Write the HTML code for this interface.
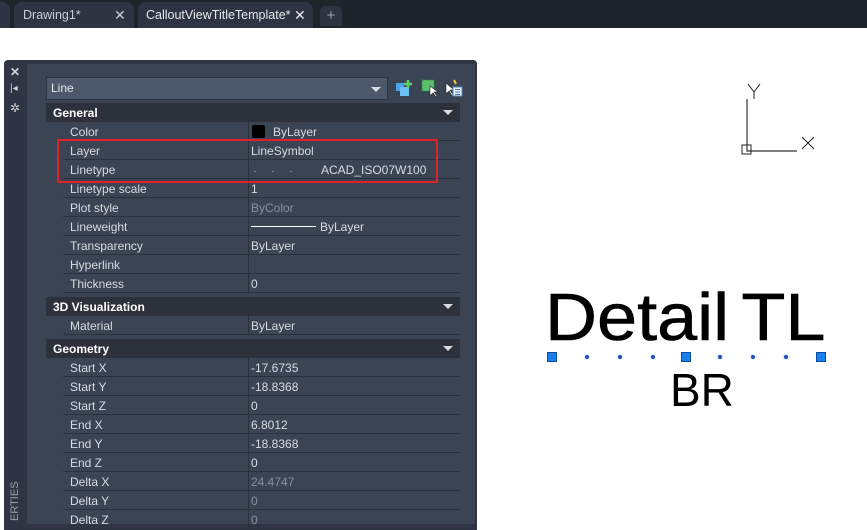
<!DOCTYPE html>
<html><head><style>
*{margin:0;padding:0;box-sizing:border-box}
body{width:867px;height:521px;background:#fff;position:relative;overflow:hidden;font-family:"Liberation Sans",sans-serif}
.a{position:absolute}
.tabbar{left:0;top:0;width:867px;height:28px;background:#1f232a}
.tab{top:2px;height:26px;background:#2e3441;border-radius:8px 8px 0 0;color:#c9ced6;font-size:12.5px;line-height:26px;white-space:nowrap}
.panel{left:4px;top:60px;width:473px;height:470px;background:#2f3542;border-radius:4px 4px 0 0}
.inner{left:27px;top:64px;width:448px;height:460px;background:#3b4453}
.row{position:absolute;left:63px;width:397px;height:19px;border-bottom:1px solid #2b313b;font-size:12px;color:#d8dce2;line-height:20px}
.row .l{position:absolute;left:7px;top:0}
.row .v{position:absolute;left:185px;top:0;width:212px;height:19px;border-left:1px solid #2b313b;padding-left:2px}
.hdr{position:absolute;left:46px;width:414px;height:19px;background:#2c313c;color:#fff;font-weight:bold;font-size:12px;line-height:20px;padding-left:7px}
.hdr:after{content:"";position:absolute;right:7px;top:7px;border-left:5px solid transparent;border-right:5px solid transparent;border-top:5px solid #d8dce2}
.gray{color:#8a909a}
</style></head><body>
<div class="a tabbar"></div>
<div class="a tab" style="left:-10px;width:20px"></div>
<div class="a tab" style="left:14px;width:120px;padding-left:9px">Drawing1*<span style="position:absolute;left:100px;font-size:14px">✕</span></div>
<div class="a tab" style="left:138px;width:175px;padding-left:8px;color:#e6e9ee">CalloutViewTitleTemplate*<span style="position:absolute;left:156px;font-size:14px">✕</span></div>
<div class="a tab" style="left:320px;top:6px;width:22px;height:20px;line-height:20px;text-align:center;border-radius:6px 6px 0 0;font-size:15px;color:#9aa0aa">+</div>

<div class="a panel"></div>
<div class="a inner"></div>
<div class="a" style="left:10px;top:64px;color:#d0d4da;font-size:12px;line-height:16px;font-weight:bold">✕</div>
<div class="a" style="left:10px;top:83px;color:#d0d4da;font-size:10px">|◂</div>
<div class="a" style="left:10px;top:101px;color:#d0d4da;font-size:12px">✲</div>
<div class="a" style="left:9px;top:521px;width:40px;height:14px;color:#9aa0aa;font-size:11px;transform:rotate(-90deg);transform-origin:0 0">ERTIES</div>

<div class="a" style="left:46px;top:77px;width:342px;height:23px;background:#4d596b;border:1px solid #2c323d;color:#e6e9ee;font-size:12px;line-height:21px;padding-left:4px">Line<div class="a" style="right:6px;top:9px;border-left:5px solid transparent;border-right:5px solid transparent;border-top:5px solid #d8dce2"></div></div>
<svg class="a" style="left:395px;top:78px" width="20" height="20" viewBox="0 0 20 20"><rect x="1" y="5" width="8" height="8" fill="#4aa3e8"/><rect x="5" y="9" width="9" height="9" fill="#6cc0f5"/><path d="M13 2v8M9 6h8" stroke="#5cd06a" stroke-width="2.5"/></svg>
<svg class="a" style="left:420px;top:78px" width="20" height="20" viewBox="0 0 20 20"><rect x="2" y="2" width="12" height="11" fill="#5cc070" stroke="#2c8a3e" stroke-dasharray="2 1"/><path d="M10 8l0 10 3-3 3 4 1-1-3-4 4 0z" fill="#fff" stroke="#222" stroke-width=".6"/></svg>
<svg class="a" style="left:444px;top:78px" width="20" height="20" viewBox="0 0 20 20"><path d="M2 5l0 11 3-3 3 5 1-1-3-5 4 0z" fill="#fff" stroke="#222" stroke-width=".6"/><path d="M10 2l2 4" stroke="#f0c040" stroke-width="2"/><rect x="9" y="9" width="9" height="9" fill="#e8f2fb" stroke="#5a8ac0"/><path d="M11 11.5h5M11 14h5M11 16.5h5" stroke="#3a78c0"/></svg>

<div class="hdr" style="top:103px">General</div>
<div class="row" style="top:122px"><span class="l">Color</span><span class="v"><span style="display:inline-block;width:13px;height:13px;background:#000;border-radius:2px;vertical-align:-2px;margin-right:8px;margin-left:1px"></span>ByLayer</span></div>
<div class="row" style="top:141px"><span class="l">Layer</span><span class="v">LineSymbol</span></div>
<div class="row" style="top:160px"><span class="l">Linetype</span><span class="v"><span style="font-size:9px;letter-spacing:0">&nbsp;·&nbsp;&nbsp;&nbsp;&nbsp;&nbsp;&nbsp;·&nbsp;&nbsp;&nbsp;&nbsp;&nbsp;&nbsp;·</span><span style="position:absolute;left:72px">ACAD_ISO07W100</span></span></div>
<div class="row" style="top:179px"><span class="l">Linetype scale</span><span class="v">1</span></div>
<div class="row" style="top:198px"><span class="l">Plot style</span><span class="v gray">ByColor</span></div>
<div class="row" style="top:217px"><span class="l">Lineweight</span><span class="v"><span style="display:inline-block;width:65px;height:1px;background:#fff;vertical-align:4px;margin-right:4px"></span>ByLayer</span></div>
<div class="row" style="top:236px"><span class="l">Transparency</span><span class="v">ByLayer</span></div>
<div class="row" style="top:255px"><span class="l">Hyperlink</span><span class="v"></span></div>
<div class="row" style="top:274px"><span class="l">Thickness</span><span class="v">0</span></div>
<div class="hdr" style="top:297px">3D Visualization</div>
<div class="row" style="top:316px"><span class="l">Material</span><span class="v">ByLayer</span></div>
<div class="hdr" style="top:339px">Geometry</div>
<div class="row" style="top:358px"><span class="l">Start X</span><span class="v">-17.6735</span></div>
<div class="row" style="top:377px"><span class="l">Start Y</span><span class="v">-18.8368</span></div>
<div class="row" style="top:396px"><span class="l">Start Z</span><span class="v">0</span></div>
<div class="row" style="top:415px"><span class="l">End X</span><span class="v">6.8012</span></div>
<div class="row" style="top:434px"><span class="l">End Y</span><span class="v">-18.8368</span></div>
<div class="row" style="top:453px"><span class="l">End Z</span><span class="v">0</span></div>
<div class="row" style="top:472px"><span class="l">Delta X</span><span class="v gray">24.4747</span></div>
<div class="row" style="top:491px"><span class="l">Delta Y</span><span class="v gray">0</span></div>
<div class="row" style="top:510px"><span class="l">Delta Z</span><span class="v gray">0</span></div>

<div class="a" style="left:57px;top:139px;width:381px;height:44px;border:2px solid #e0202a"></div>

<svg class="a" style="left:730px;top:78px" width="90" height="80" viewBox="0 0 90 80"><path d="M17 21V73h50" stroke="#333" stroke-width="1.2" fill="none"/><rect x="12" y="67" width="9" height="9" fill="none" stroke="#222"/><path d="M18 6l6 8 6-8M24 14v7" stroke="#222" fill="none"/><path d="M72 59l12 12M84 59l-12 12" stroke="#222" fill="none"/></svg>
<div class="a" style="left:545px;top:280px;font-size:67px;line-height:76px;color:#000;white-space:nowrap;word-spacing:-6px;transform:scaleX(1.075);transform-origin:0 0;-webkit-text-stroke:0.6px #000">Detail TL</div>
<div class="a" style="left:670px;top:364px;font-size:46px;line-height:52px;color:#000">BR</div>
<div class="a" style="left:547px;top:352px;width:10px;height:10px;background:#1a7fea;border:1px solid #0a4aa0"></div>
<div class="a" style="left:681px;top:352px;width:10px;height:10px;background:#1a7fea;border:1px solid #0a4aa0"></div>
<div class="a" style="left:816px;top:352px;width:10px;height:10px;background:#1a7fea;border:1px solid #0a4aa0"></div>
<div class="a" style="left:585px;top:355px;width:4px;height:4px;border-radius:2px;background:#2050c0;box-shadow:0 0 2px #8ab0ff"></div>
<div class="a" style="left:618px;top:355px;width:4px;height:4px;border-radius:2px;background:#2050c0;box-shadow:0 0 2px #8ab0ff"></div>
<div class="a" style="left:651px;top:355px;width:4px;height:4px;border-radius:2px;background:#2050c0;box-shadow:0 0 2px #8ab0ff"></div>
<div class="a" style="left:718px;top:355px;width:4px;height:4px;border-radius:2px;background:#2050c0;box-shadow:0 0 2px #8ab0ff"></div>
<div class="a" style="left:751px;top:355px;width:4px;height:4px;border-radius:2px;background:#2050c0;box-shadow:0 0 2px #8ab0ff"></div>
<div class="a" style="left:784px;top:355px;width:4px;height:4px;border-radius:2px;background:#2050c0;box-shadow:0 0 2px #8ab0ff"></div>
</body></html>
